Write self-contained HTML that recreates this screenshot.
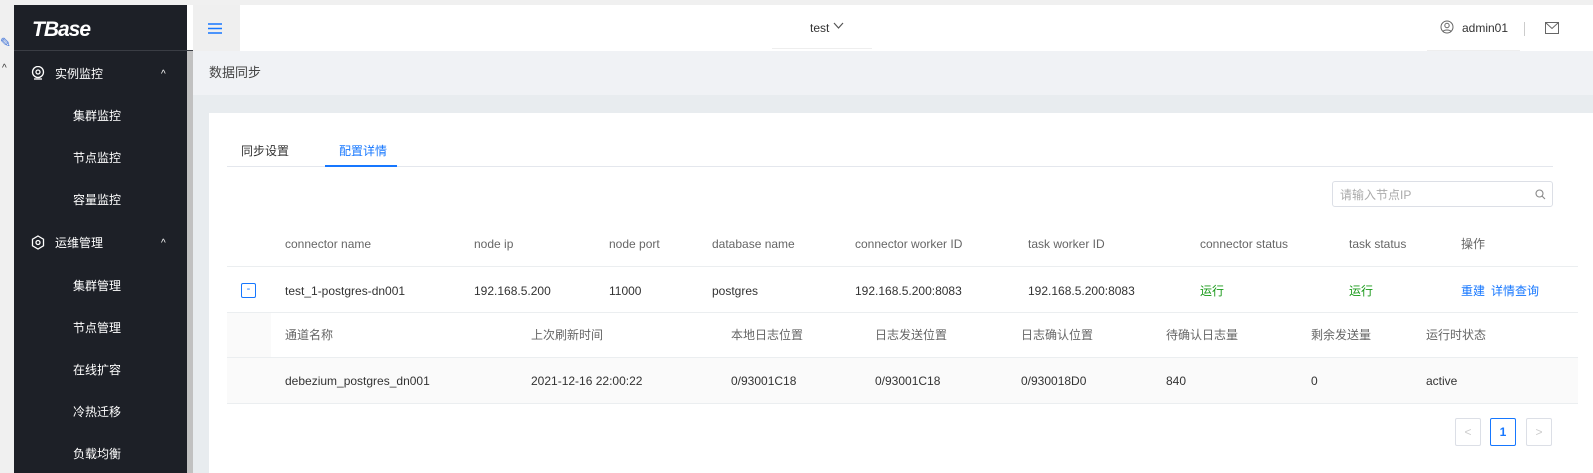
<!DOCTYPE html>
<html><head><meta charset="utf-8"><style>
*{margin:0;padding:0;box-sizing:border-box}
body{width:1593px;height:473px;overflow:hidden;position:relative;background:#fff;font-family:"Liberation Sans","Noto Sans CJK SC",sans-serif;font-size:12px;color:#333;line-height:14px}
.a{position:absolute;white-space:nowrap}
.side{left:14px;top:5px;width:173px;height:468px;background:#1d2027}
.sb{left:187px;top:51px;width:6px;height:422px;background:#c1c1c1}
.mi{color:#fff;font-size:12px}
.th{color:#666}
.line{position:absolute;height:1px;background:#ebeef0}
.pg{position:absolute;top:418px;width:26px;height:28px;border:1px solid #dcdfe6;border-radius:2px;text-align:center;line-height:26px;color:#ccc}
</style></head><body>
<div class="a" style="left:0;top:0;width:1593px;height:5px;background:#f0f0f0"></div>
<div class="a" style="left:0;top:0;width:14px;height:473px;background:#f0f0f0"></div>
<div class="a" style="left:0;top:36px;color:#3a6fd8;font-size:13px">✎</div>
<div class="a" style="left:2px;top:62px;font-size:10px;color:#333">^</div>
<div class="a side"></div>
<div class="a" style="left:14px;top:50px;width:179px;height:1px;background:#3a3d44"></div>
<div class="a" style="left:32px;top:18px;color:#fff;font-size:21px;line-height:24px;font-weight:bold;font-style:italic;letter-spacing:-1px">TBase</div>
<div class="a sb"></div>
<svg class="a" style="left:31px;top:66px" width="14" height="14" viewBox="0 0 14 14"><circle cx="7" cy="6" r="5.5" fill="none" stroke="#fff" stroke-width="1.3"/><circle cx="7" cy="6" r="2" fill="none" stroke="#fff" stroke-width="1.3"/><path d="M3 13h8" stroke="#fff" stroke-width="1.3"/></svg>
<div class="a mi" style="left:55px;top:67px">实例监控</div><div class="a mi" style="left:161px;top:68px;font-size:10px">^</div>
<div class="a mi" style="left:73px;top:109px">集群监控</div>
<div class="a mi" style="left:73px;top:151px">节点监控</div>
<div class="a mi" style="left:73px;top:193px">容量监控</div>
<svg class="a" style="left:31px;top:235px" width="14" height="15" viewBox="0 0 14 15"><path d="M7 1l5.5 3.2v6.6L7 14l-5.5-3.2V4.2z" fill="none" stroke="#fff" stroke-width="1.3"/><circle cx="7" cy="7.5" r="2" fill="none" stroke="#fff" stroke-width="1.3"/></svg>
<div class="a mi" style="left:55px;top:236px">运维管理</div><div class="a mi" style="left:161px;top:237px;font-size:10px">^</div>
<div class="a mi" style="left:73px;top:279px">集群管理</div>
<div class="a mi" style="left:73px;top:321px">节点管理</div>
<div class="a mi" style="left:73px;top:363px">在线扩容</div>
<div class="a mi" style="left:73px;top:405px">冷热迁移</div>
<div class="a mi" style="left:73px;top:447px">负载均衡</div>
<div class="a" style="left:193px;top:5px;width:47px;height:46px;background:#efefef"></div>
<svg class="a" style="left:208px;top:23px" width="14" height="11"><path d="M0 1h14M0 5.5h14M0 10h14" stroke="#1677ff" stroke-width="1.6"/></svg>
<div class="a" style="left:810px;top:21px;font-size:12px">test</div>
<svg class="a" style="left:833px;top:22px" width="11" height="8"><path d="M1 1l4.5 5 4.5-5" fill="none" stroke="#555" stroke-width="1.2"/></svg>
<div class="a" style="left:772px;top:48px;width:100px;height:1px;background:#eee"></div>
<svg class="a" style="left:1440px;top:20px" width="14" height="14"><circle cx="7" cy="7" r="6" fill="none" stroke="#666"/><circle cx="7" cy="5.5" r="2.2" fill="none" stroke="#666"/><path d="M3 11.5c1-2 7-2 8 0" fill="none" stroke="#666"/></svg>
<div class="a" style="left:1462px;top:21px;color:#333">admin01</div>
<div class="a" style="left:1427px;top:50px;width:93px;height:1px;background:#eee"></div>
<div class="a" style="left:1524px;top:22px;width:1px;height:14px;background:#ccc"></div>
<svg class="a" style="left:1545px;top:22px" width="14" height="12"><rect x="0.5" y="0.5" width="13" height="11" fill="none" stroke="#666"/><path d="M0.5 0.5l6.5 6 6.5-6" fill="none" stroke="#666"/></svg>
<div class="a" style="left:193px;top:51px;width:1400px;height:44px;background:#f0f2f5"></div>
<div class="a" style="left:209px;top:66px;font-size:13px;color:#444">数据同步</div>
<div class="a" style="left:193px;top:95px;width:1400px;height:378px;background:#e8ecef"></div>
<div class="a" style="left:209px;top:113px;width:1384px;height:360px;background:#fff"></div>
<div class="a" style="left:241px;top:144px">同步设置</div>
<div class="a" style="left:339px;top:144px;color:#1677ff">配置详情</div>
<div class="line" style="left:227px;top:166px;width:1326px;background:#e4e7ed"></div>
<div class="a" style="left:325px;top:165px;width:72px;height:2px;background:#1677ff"></div>
<div class="a" style="left:1332px;top:181px;width:221px;height:26px;border:1px solid #dcdfe6;border-radius:3px"></div>
<div class="a" style="left:1340px;top:188px;color:#aaa">请输入节点IP</div>
<svg class="a" style="left:1535px;top:189px" width="11" height="11"><circle cx="4.5" cy="4.5" r="3.5" fill="none" stroke="#888" stroke-width="1.1"/><path d="M7 7l3 3" stroke="#888" stroke-width="1.1"/></svg>
<div class="a th" style="left:285px;top:237px">connector name</div>
<div class="a th" style="left:474px;top:237px">node ip</div>
<div class="a th" style="left:609px;top:237px">node port</div>
<div class="a th" style="left:712px;top:237px">database name</div>
<div class="a th" style="left:855px;top:237px">connector worker ID</div>
<div class="a th" style="left:1028px;top:237px">task worker ID</div>
<div class="a th" style="left:1200px;top:237px">connector status</div>
<div class="a th" style="left:1349px;top:237px">task status</div>
<div class="a th" style="left:1461px;top:237px">操作</div>
<div class="line" style="left:227px;top:266px;width:1351px"></div>
<div class="a" style="left:241px;top:283px;width:15px;height:15px;border:1px solid #1677ff;border-radius:2px;color:#1677ff;text-align:center;line-height:11px;font-size:11px">-</div>
<div class="a" style="left:285px;top:284px">test_1-postgres-dn001</div>
<div class="a" style="left:474px;top:284px">192.168.5.200</div>
<div class="a" style="left:609px;top:284px">11000</div>
<div class="a" style="left:712px;top:284px">postgres</div>
<div class="a" style="left:855px;top:284px">192.168.5.200:8083</div>
<div class="a" style="left:1028px;top:284px">192.168.5.200:8083</div>
<div class="a" style="left:1200px;top:284px;color:#1a9a1a">运行</div>
<div class="a" style="left:1349px;top:284px;color:#1a9a1a">运行</div>
<div class="a" style="left:1461px;top:284px;color:#1677ff">重建</div>
<div class="a" style="left:1491px;top:284px;color:#1677ff">详情查询</div>
<div class="a" style="left:227px;top:312px;width:1351px;height:91px;background:#fafafa"></div>
<div class="a" style="left:271px;top:313px;width:1307px;height:44px;background:#fff"></div>
<div class="line" style="left:227px;top:312px;width:1351px"></div>
<div class="a th" style="left:285px;top:328px">通道名称</div>
<div class="a th" style="left:531px;top:328px">上次刷新时间</div>
<div class="a th" style="left:731px;top:328px">本地日志位置</div>
<div class="a th" style="left:875px;top:328px">日志发送位置</div>
<div class="a th" style="left:1021px;top:328px">日志确认位置</div>
<div class="a th" style="left:1166px;top:328px">待确认日志量</div>
<div class="a th" style="left:1311px;top:328px">剩余发送量</div>
<div class="a th" style="left:1426px;top:328px">运行时状态</div>
<div class="line" style="left:227px;top:357px;width:1351px"></div>
<div class="a" style="left:285px;top:374px">debezium_postgres_dn001</div>
<div class="a" style="left:531px;top:374px">2021-12-16 22:00:22</div>
<div class="a" style="left:731px;top:374px">0/93001C18</div>
<div class="a" style="left:875px;top:374px">0/93001C18</div>
<div class="a" style="left:1021px;top:374px">0/930018D0</div>
<div class="a" style="left:1166px;top:374px">840</div>
<div class="a" style="left:1311px;top:374px">0</div>
<div class="a" style="left:1426px;top:374px">active</div>
<div class="line" style="left:227px;top:403px;width:1351px"></div>
<div class="pg" style="left:1455px">&lt;</div>
<div class="pg" style="left:1490px;border-color:#1677ff;color:#1677ff;font-weight:bold">1</div>
<div class="pg" style="left:1526px">&gt;</div>
</body></html>
